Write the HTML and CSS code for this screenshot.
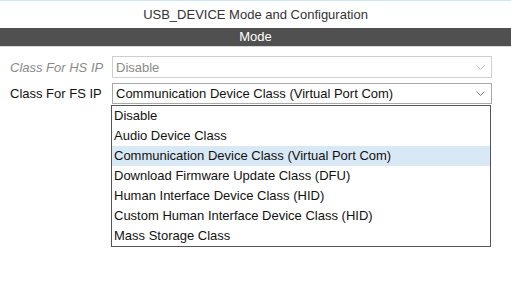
FILE: index.html
```html
<!DOCTYPE html>
<html lang="en">
<head>
<meta charset="UTF-8" />
<meta name="viewport" content="width=device-width, initial-scale=1.0" />
<title>USB_DEVICE Mode and Configuration</title>
<link rel="stylesheet" href="styles.css">
</head>
<body>
<div class="panel">
  <div class="title">USB_DEVICE Mode and Configuration</div>
  <div class="bar">Mode</div>

  <!-- Настройки режима -->
  <div class="form">
    <div class="row disabled">
      <span class="label">Class For HS IP</span>
      <div class="select">
        <span class="value">Disable</span>
        <svg class="arrow" width="9" height="5" viewBox="0 0 9 5"><polyline points="0.5,0.5 4.5,4.5 8.5,0.5" fill="none" stroke="currentColor" stroke-width="1"/></svg>
      </div>
    </div>
    <div class="row">
      <span class="label">Class For FS IP</span>
      <div class="select open">
        <span class="value">Communication Device Class (Virtual Port Com)</span>
        <svg class="arrow" width="9" height="5" viewBox="0 0 9 5"><polyline points="0.5,0.5 4.5,4.5 8.5,0.5" fill="none" stroke="currentColor" stroke-width="1"/></svg>
      </div>
    </div>
    <!-- Выпадающий список -->
    <ul class="dropdown">
      <li>Disable</li>
      <li>Audio Device Class</li>
      <li class="selected">Communication Device Class (Virtual Port Com)</li>
      <li>Download Firmware Update Class (DFU)</li>
      <li>Human Interface Device Class (HID)</li>
      <li>Custom Human Interface Device Class (HID)</li>
      <li>Mass Storage Class</li>
    </ul>
  </div>
</div>
</body>
</html>
```

FILE: styles.css
```css
body {
  margin: 0;
  font-family: "Liberation Sans", Arial, sans-serif;
  font-size: 13px;
  color: #222;
  background: #fff;
}
.panel {
  border-top: 1px solid #cde7f5;
}
.title {
  height: 27px;
  line-height: 28px;
  text-align: center;
  color: #333;
}
.bar {
  height: 18px;
  line-height: 18px;
  background-color: #4f504f;
  color: #fff;
  text-align: center;
  border-bottom: 1px solid #d8d8d8;
}

/* Строки формы */
.form {
  padding-top: 9px;
}
.row {
  display: flex;
  align-items: center;
  margin-bottom: 5px;
}
.label {
  width: 112px;
  padding-left: 10px;
  box-sizing: border-box;
  color: #111;
}
.select {
  width: 380px;
  height: 21px;
  box-sizing: border-box;
  border: 1px solid #b4b4b4;
  display: flex;
  align-items: center;
  padding-left: 3px;
  color: #111;
}
.select .value {
  flex: 1;
}
.arrow {
  margin-right: 6px;
  color: #777;
}
.row.disabled .label {
  font-style: italic;
  color: #8a8a8a;
}
.row.disabled .select {
  height: 22px;
  border-color: #cfcfcf;
  color: #8a8a8a;
}
.row.disabled .arrow {
  color: #c4c4c4;
}
.select.open {
  border-color: #a8a8a8;
}

/* Выпадающий список */
.dropdown {
  width: 380px;
  margin: -4px 0 0 111px;
  padding: 0;
  list-style: none;
  box-sizing: border-box;
  border: 1px solid #555;
  background: #fff;
}
.dropdown li {
  height: 20px;
  line-height: 20px;
  padding-left: 2px;
  color: #111;
}
.dropdown li.selected {
  background-color: #d9e8f5;
}
```
